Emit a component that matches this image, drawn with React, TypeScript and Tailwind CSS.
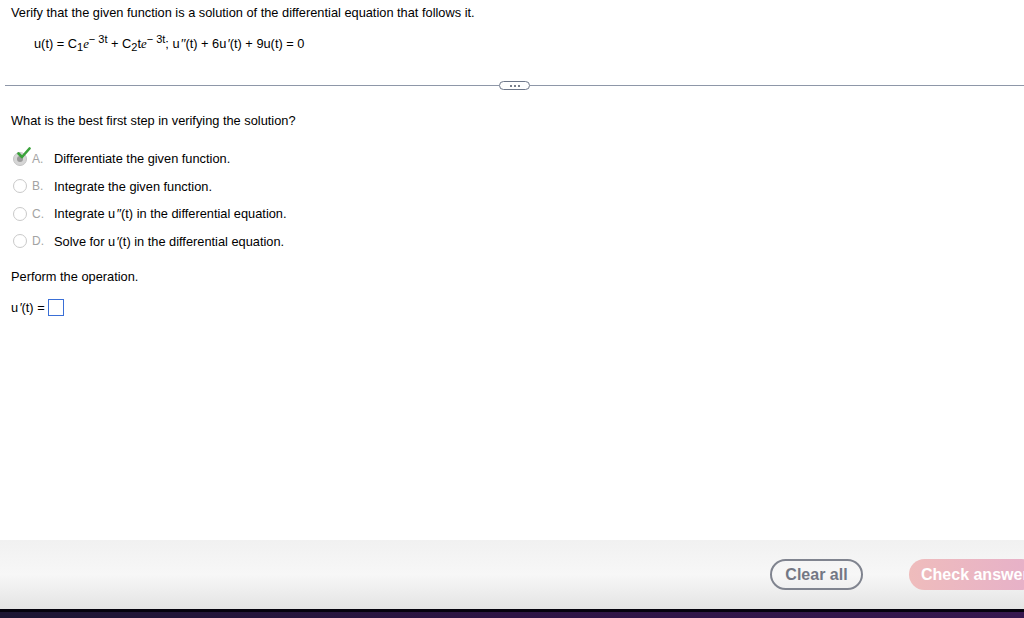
import { Fragment } from "react";

const options = [
  { letter: "A.", text: <>Differentiate the given function.</>, selected: true },
  { letter: "B.", text: <>Integrate the given function.</> },
  { letter: "C.", text: <>Integrate u<span className="ml-[1px] italic">′′</span>(t) in the differential equation.</> },
  { letter: "D.", text: <>Solve for u<span className="ml-[1px] italic">′</span>(t) in the differential equation.</> },
];

function Radio({ selected }: { selected?: boolean }) {
  if (selected) {
    return (
      <span className="relative inline-block h-[14px] w-[14px]">
        <span className="absolute inset-0 rounded-full border border-[#c4c4c4] bg-[#d6d6d6]" />
        <span className="absolute left-[4px] top-[4px] h-[6px] w-[6px] rounded-full bg-[#9a9a9a]" />
        <svg className="absolute -top-[5px] left-[4px]" width="14" height="12" viewBox="0 0 14 12">
          <path d="M1.5 6.5 L5 10 L12.5 1.5" fill="none" stroke="#3aa23a" strokeWidth="2.6" strokeLinecap="round" strokeLinejoin="round" />
        </svg>
      </span>
    );
  }
  return <span className="inline-block h-[14px] w-[14px] rounded-full border border-[#c9c9c9] bg-white" />;
}

export default function App() {
  return (
    <div
      className="relative flex h-[618px] w-[1024px] flex-col overflow-hidden bg-white text-[12.8px] text-black"
      style={{ fontFamily: '"Liberation Sans", Arial, sans-serif' }}
    >
      <div className="flex-1">
        <p className="pl-[11px] pt-[5px] leading-[16px]">
          Verify that the given function is a solution of the differential equation that follows it.
        </p>
        <p className="mt-[15px] pl-[34px] leading-[16px]">
          u(t) = C<sub className="text-[11px]">1</sub>
          <span className="italic" style={{ fontFamily: '"Liberation Serif", serif' }}>e</span>
          <sup className="text-[11px]">− 3t</sup> + C<sub className="text-[11px]">2</sub>t
          <span className="italic" style={{ fontFamily: '"Liberation Serif", serif' }}>e</span>
          <sup className="text-[11px]">− 3t</sup>; u<span className="ml-[1px] italic">′′</span>(t) + 6u
          <span className="ml-[1px] italic">′</span>(t) + 9u(t) = 0
        </p>

        <div className="mt-[29px] flex items-center pl-[5px]">
          <div className="h-px flex-1 bg-[#8e97a8]" />
          <div className="flex h-[9px] w-[31px] items-center justify-center gap-[2px] rounded-full border border-[#6e778a] bg-white">
            <span className="h-[2px] w-[2px] rounded-full bg-[#4d5566]" />
            <span className="h-[2px] w-[2px] rounded-full bg-[#4d5566]" />
            <span className="h-[2px] w-[2px] rounded-full bg-[#4d5566]" />
          </div>
          <div className="h-px flex-1 bg-[#8e97a8]" />
        </div>

        <p className="mt-[23px] pl-[11px] leading-[16px]">What is the best first step in verifying the solution?</p>

        <div className="mt-[22px] flex flex-col gap-[11.4px] pl-[13px]">
          {options.map((o) => (
            <Fragment key={o.letter}>
              <div className="flex h-[16px] items-center">
                <Radio selected={o.selected} />
                <span className="ml-[5px] w-[22px] text-[12px] text-[#a3a3a3]">{o.letter}</span>
                <span>{o.text}</span>
              </div>
            </Fragment>
          ))}
        </div>

        <p className="mt-[20px] pl-[11px] leading-[16px]">Perform the operation.</p>

        <div className="mt-[13px] flex items-center pl-[11px]">
          <span>
            u<span className="ml-[1px] italic">′</span>(t) =
          </span>
          <span className="ml-[3px] inline-block h-[17px] w-[16px] border border-[#3a6fd6] bg-white" />
        </div>
      </div>

      <div className="flex h-[69px] items-center justify-end bg-gradient-to-b from-[#f1f1f1] via-[#f7f7f7] to-[#e4e4e4]">
        <button className="mr-[46px] h-[31px] w-[93px] rounded-full border-2 border-[#80848f] bg-transparent text-[16px] font-bold text-[#737784]">
          Clear all
        </button>
        <button className="-mr-[13px] h-[31px] w-[128px] shrink-0 rounded-full bg-gradient-to-r from-[#efbcbc] to-[#e6b0c9] pl-[12px] text-left text-[16px] font-bold text-white">
          Check answer
        </button>
      </div>
      <div className="h-[3px] bg-[#05030d]" />
      <div className="h-[6px] bg-gradient-to-r from-[#1c1633] via-[#2e1545] to-[#36184f]" />
    </div>
  );
}
